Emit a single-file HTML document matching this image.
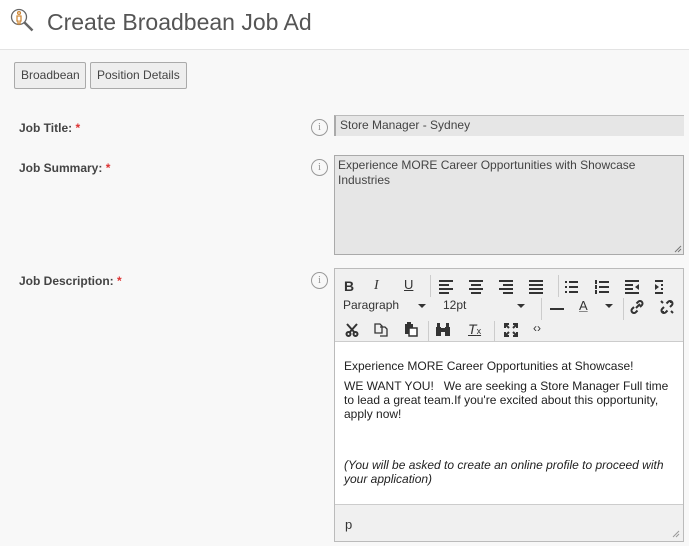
<!DOCTYPE html>
<html><head><meta charset="utf-8">
<style>
*{box-sizing:border-box;margin:0;padding:0}
body{width:689px;height:546px;overflow:hidden;background:#f8f8f8;font-family:"Liberation Sans",Arial,sans-serif;color:#333;position:relative}
.hdr{position:absolute;left:0;top:0;width:689px;height:50px;background:#fff;border-bottom:1px solid #e3e3e3}
.hdr h1{position:absolute;left:47px;top:9px;font-weight:normal;font-size:23px;color:#555}
.btn{position:absolute;top:62px;height:27px;border:1px solid #aaa;border-radius:2px;background:#eee;font-size:12px;color:#444;line-height:25px;padding:0 6px}
.lbl{position:absolute;left:19px;font-size:12px;font-weight:bold;color:#444}
.lbl span{color:#d33}
.info{position:absolute;left:311px;width:17px;height:17px;border:1.5px solid #999;border-radius:50%;color:#999;font-size:11px;text-align:center;line-height:14px;font-family:"Liberation Serif",serif}
.inp{position:absolute;left:334px;width:350px;background:#e6e6e6;border:1px solid #aaa;font-size:12px;color:#444;padding:3px 4px}
.ed{position:absolute;left:334px;top:268px;width:350px;height:274px;border:1px solid #bbb;background:#f0f0f0}
.tb{position:absolute;font-size:13px;color:#333}
.ic{position:absolute}
.sep{position:absolute;width:1px;background:#ccc}
.content{position:absolute;left:0;top:72px;width:348px;height:164px;background:#fff;border-top:1px solid #ccc;border-bottom:1px solid #ccc;font-size:12px;color:#222;padding:17px 9px}
.content p{margin-bottom:6px;line-height:14px}
</style></head><body>
<div class="hdr">
<svg style="position:absolute;left:10px;top:8px" width="28" height="28" viewBox="0 0 28 28" fill="none" stroke-width="1.3"><circle cx="9" cy="9" r="7.5" stroke="#666"/><circle cx="9" cy="5" r="1.4" stroke="#d08a3a"/><path d="M7 8h4v5h-1v3H8v-3H7z" stroke="#d08a3a"/><path d="M14.5 14.5l8 8" stroke="#666" stroke-width="2.5"/></svg>
<h1>Create Broadbean Job Ad</h1>
</div>
<div class="btn" style="left:14px;width:72px">Broadbean</div>
<div class="btn" style="left:90px;width:97px">Position Details</div>

<div class="lbl" style="top:121px">Job Title: <span>*</span></div>
<div class="lbl" style="top:161px">Job Summary: <span>*</span></div>
<div class="lbl" style="top:274px">Job Description: <span>*</span></div>
<div class="info" style="top:119px">i</div>
<div class="info" style="top:159px">i</div>
<div class="info" style="top:272px">i</div>

<div class="inp" style="top:115px;height:21px;border-left:2px solid #aaa;border-top:1px solid #bbb;border-bottom:none;border-right:none;padding:2px 4px;font-size:12px">Store Manager - Sydney</div>
<div class="inp" style="top:155px;height:100px;line-height:15px;padding:2px 3px">Experience MORE Career Opportunities with Showcase Industries
<svg style="position:absolute;right:1px;bottom:1px" width="8" height="8" stroke="#777"><path d="M1 7L7 1M4 7L7 4"/></svg></div>

<div class="ed">
<div class="tb" style="left:9px;top:9px;font-weight:bold;font-size:14px">B</div>
<div class="tb" style="left:39px;top:9px;font-style:italic;font-size:14px;font-family:'Liberation Serif',serif">I</div>
<div class="tb" style="left:69px;top:8px;text-decoration:underline;font-size:13px">U</div>
<div class="sep" style="left:95px;top:6px;height:22px"></div>
<svg class="ic" style="left:104px;top:11px" width="224" height="14" fill="#333">
<g><rect x="0" y="0" width="14" height="2"/><rect x="0" y="4" width="10" height="2"/><rect x="0" y="8" width="14" height="2"/><rect x="0" y="12" width="10" height="2"/></g>
<g transform="translate(30)"><rect x="0" y="0" width="14" height="2"/><rect x="2" y="4" width="10" height="2"/><rect x="0" y="8" width="14" height="2"/><rect x="2" y="12" width="10" height="2"/></g>
<g transform="translate(60)"><rect x="0" y="0" width="14" height="2"/><rect x="4" y="4" width="10" height="2"/><rect x="0" y="8" width="14" height="2"/><rect x="4" y="12" width="10" height="2"/></g>
<g transform="translate(90)"><rect x="0" y="0" width="14" height="2"/><rect x="0" y="4" width="14" height="2"/><rect x="0" y="8" width="14" height="2"/><rect x="0" y="12" width="14" height="2"/></g>
<g transform="translate(126)"><rect x="0" y="1" width="2" height="2"/><rect x="4" y="1" width="9" height="2"/><rect x="0" y="6" width="2" height="2"/><rect x="4" y="6" width="9" height="2"/><rect x="0" y="11" width="2" height="2"/><rect x="4" y="11" width="9" height="2"/></g>
<g transform="translate(156)"><rect x="0" y="0" width="2" height="4"/><rect x="4" y="1" width="10" height="2"/><rect x="0" y="5" width="2" height="4"/><rect x="4" y="6" width="10" height="2"/><rect x="0" y="10" width="2" height="4"/><rect x="4" y="11" width="10" height="2"/></g>
<g transform="translate(186)"><rect x="0" y="0" width="14" height="2"/><rect x="0" y="4" width="8" height="2"/><rect x="0" y="8" width="8" height="2"/><rect x="0" y="12" width="14" height="2"/><path d="M14 4v6l-4-3z"/></g>
<g transform="translate(216)"><rect x="0" y="0" width="14" height="2"/><rect x="6" y="4" width="8" height="2"/><rect x="6" y="8" width="8" height="2"/><rect x="0" y="12" width="14" height="2"/><path d="M0 4v6l4-3z"/></g>
</svg>
<div class="sep" style="left:223px;top:6px;height:22px"></div>
<div class="tb" style="left:8px;top:29px;font-size:12px">Paragraph</div>
<svg class="ic" style="left:83px;top:35px" width="8" height="5"><path d="M0 0h8L4 4z" fill="#333"/></svg>
<div class="tb" style="left:108px;top:29px;font-size:12px">12pt</div>
<svg class="ic" style="left:182px;top:35px" width="8" height="5"><path d="M0 0h8L4 4z" fill="#333"/></svg>
<div class="sep" style="left:206px;top:29px;height:22px"></div>
<div class="ic" style="left:215px;top:39px;width:14px;height:2px;background:#333"></div>
<div class="tb" style="left:244px;top:29px;font-size:13px;text-decoration:underline;text-decoration-color:#888">A</div>
<svg class="ic" style="left:270px;top:35px" width="8" height="5"><path d="M0 0h8L4 4z" fill="#333"/></svg>
<div class="sep" style="left:288px;top:29px;height:22px"></div>
<svg class="ic" style="left:294px;top:30px" width="16" height="16" fill="none" stroke="#333" stroke-width="2"><path d="M7 9l4-4M5 8l-2 2a2.5 2.5 0 003.5 3.5l2-2M11 8l2-2a2.5 2.5 0 00-3.5-3.5l-2 2"/></svg>
<svg class="ic" style="left:324px;top:30px" width="16" height="16" fill="none" stroke="#333" stroke-width="2"><path d="M5 8l-2 2a2.5 2.5 0 003.5 3.5l2-2M11 8l2-2a2.5 2.5 0 00-3.5-3.5l-2 2M2 2l2 2M14 14l-2-2M12 2v2M4 14v-2"/></svg>
<svg class="ic" style="left:10px;top:54px" width="14" height="14" fill="none" stroke="#333" stroke-width="2"><path d="M2 1l8 9M12 1l-8 9"/><circle cx="3.5" cy="11" r="2"/><circle cx="10.5" cy="11" r="2"/></svg>
<svg class="ic" style="left:39px;top:54px" width="14" height="14" fill="none" stroke="#333" stroke-width="1.3"><path d="M1 1h5l2 2v7H1z M6 4h5l2 2v7H6"/></svg>
<svg class="ic" style="left:69px;top:53px" width="14" height="15" fill="#333"><rect x="1" y="2" width="8" height="10"/><rect x="5" y="6" width="8" height="8" fill="#fff" stroke="#333" stroke-width="1.5"/><rect x="3" y="0" width="4" height="3"/></svg>
<div class="sep" style="left:93px;top:52px;height:20px"></div>
<svg class="ic" style="left:100px;top:54px" width="16" height="14" fill="#333"><rect x="1" y="4" width="5" height="9"/><rect x="10" y="4" width="5" height="9"/><rect x="2" y="0" width="3" height="5"/><rect x="11" y="0" width="3" height="5"/><rect x="6" y="5" width="4" height="4"/></svg>
<div class="tb" style="left:133px;top:52px;font-style:italic;font-size:14px;text-decoration:underline">T<span style="font-size:9px;font-style:normal;text-decoration:none">x</span></div>
<div class="sep" style="left:159px;top:52px;height:20px"></div>
<svg class="ic" style="left:169px;top:54px" width="14" height="14" fill="none" stroke="#333" stroke-width="2"><path d="M1 5V1h4M9 1h4v4M13 9v4H9M5 13H1V9M1 1l4 4M13 1l-4 4M13 13l-4-4M1 13l4-4"/></svg>
<div class="tb" style="left:198px;top:52px;font-size:12px">&lsaquo;&rsaquo;</div>
<div class="content">
<p>Experience MORE Career Opportunities at Showcase!</p>
<p>WE WANT YOU!&nbsp;&nbsp; We are seeking a Store Manager Full time to lead a great team.If you're excited about this opportunity, apply now!</p>
<p style="margin-top:37px;font-style:italic">(You will be asked to create an online profile to proceed with your application)</p>
</div>
<div class="tb" style="left:10px;top:248px;font-size:13px">p</div>
<svg class="ic" style="right:3px;bottom:3px" width="8" height="8" stroke="#999"><path d="M1 7L7 1M4 7L7 4"/></svg>
</div>
</body></html>
